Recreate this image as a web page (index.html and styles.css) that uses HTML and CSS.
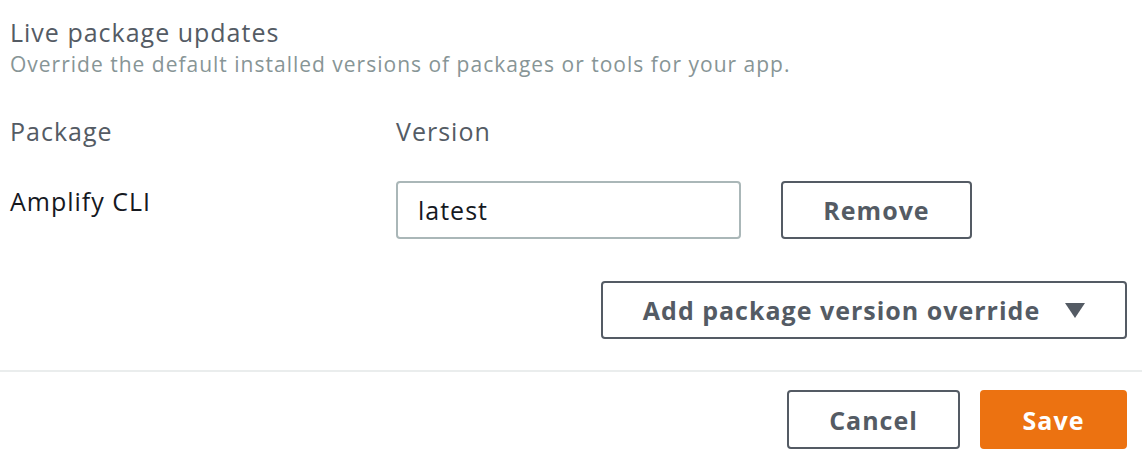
FILE: index.html
```html
<!DOCTYPE html>
<html lang="en">
<head>
    <meta charset="UTF-8">
    <title>Live package updates</title>
    <link rel="stylesheet" href="styles.css">
</head>
<body>
    <div class="panel">
        <div class="header">
            <h2 class="title">Live package updates</h2>
            <p class="subtitle">Override the default installed versions of packages or tools for your app.</p>
        </div>
        <div class="grid">
            <div class="col-label">Package</div>
            <div class="col-label">Version</div>
            <div></div>
            <div class="pkg-name">Amplify CLI</div>
            <div><input type="text" class="input-field" value="latest"></div>
            <button class="btn btn-remove">Remove</button>
        </div>
        <div class="add-row">
            <button class="btn btn-add">Add package version override <span class="caret"></span></button>
        </div>
    </div>
    <div class="footer">
        <button class="btn btn-cancel">Cancel</button>
        <button class="btn btn-save">Save</button>
    </div>
</body>
</html>
```

FILE: styles.css
```css
body {
    font-family: "Open Sans", "Noto Sans", Arial, sans-serif;
    margin: 0;
    padding: 0;
    background: #fff;
    color: #16191f;
    letter-spacing: 1px;
}
.panel {
    padding: 0 15px 31px 10px;
    border-bottom: 2px solid #eaeded;
}
.header {
    padding-top: 15px;
}
.title {
    margin: 0;
    font-size: 25px;
    font-weight: 400;
    color: #545b64;
    line-height: 34px;
}
.subtitle {
    margin: 0;
    font-size: 21px;
    color: #879596;
    line-height: 30px;
}
.grid {
    display: grid;
    grid-template-columns: 386px 385px 191px;
    row-gap: 30px;
    align-items: start;
    margin-top: 32px;
}
.col-label {
    font-size: 25px;
    color: #545b64;
    line-height: 40px;
}
.pkg-name {
    font-size: 25px;
    color: #16191f;
    line-height: 40px;
}
.input-field {
    display: block;
    box-sizing: border-box;
    height: 58px;
    width: 345px;
    margin: 0;
    border: 2px solid #aab7b8;
    border-radius: 4px;
    padding: 0 20px;
    font-family: inherit;
    font-size: 25px;
    letter-spacing: 1px;
    color: #16191f;
    outline: none;
}
.btn {
    box-sizing: border-box;
    height: 58px;
    margin: 0;
    border: 2px solid #545b64;
    border-radius: 4px;
    background: #fff;
    color: #545b64;
    font-family: inherit;
    font-size: 25px;
    font-weight: 700;
    letter-spacing: 1px;
    padding: 0 20px;
    cursor: pointer;
}
.btn-remove {
    width: 191px;
}
.add-row {
    display: flex;
    justify-content: flex-end;
    margin-top: 42px;
}
.btn-add {
    width: 526px;
    display: flex;
    align-items: center;
    justify-content: center;
    gap: 25px;
}
.caret {
    width: 0;
    height: 0;
    border-left: 10px solid transparent;
    border-right: 10px solid transparent;
    border-top: 15px solid #545b64;
}
.footer {
    display: flex;
    justify-content: flex-end;
    gap: 20px;
    padding: 18px 15px 0 0;
}
.btn-cancel {
    width: 173px;
    height: 59px;
}
.btn-save {
    width: 147px;
    height: 59px;
    background: #ec7211;
    border-color: #ec7211;
    color: #fff;
}
```
